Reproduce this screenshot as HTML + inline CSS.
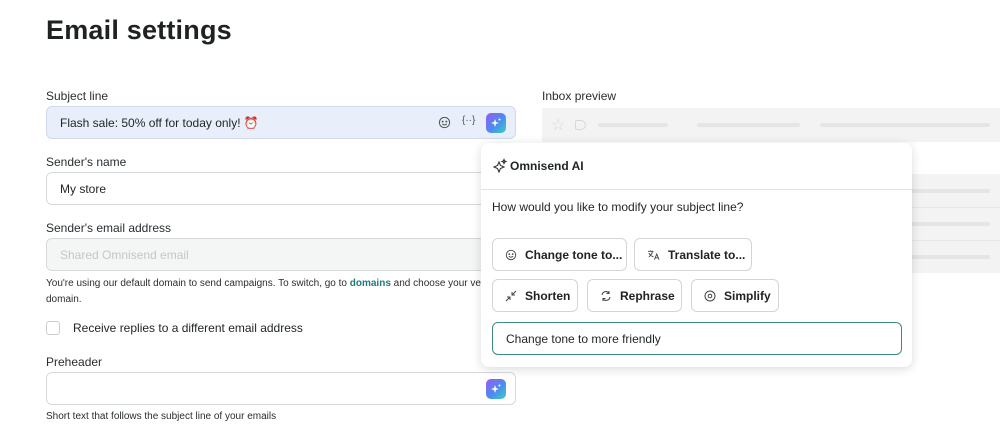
<!DOCTYPE html>
<html><head><meta charset="utf-8"><style>
*{box-sizing:border-box;margin:0;padding:0}
body{width:1000px;height:432px;overflow:hidden;background:#fff;font-family:"Liberation Sans",sans-serif;color:#1f2426;position:relative}
.a{position:absolute;white-space:nowrap}
h1{position:absolute;left:46px;top:15px;font-size:27px;font-weight:bold;letter-spacing:0.2px;color:#1e2222}
.lbl{font-size:12px;color:#2a2e30}
.inp{border:1px solid #d6d9db;border-radius:6px;background:#fff}
.t{font-size:12px}
.btn{position:absolute;border:1px solid #d3d6d8;border-radius:6px;background:#fff;font-size:12px;font-weight:bold;color:#222;display:flex;align-items:center;padding-left:12px;height:33px;white-space:nowrap}
.btn svg{margin-right:8px}
.ai{position:absolute;width:20px;height:20px;border-radius:5px;background:linear-gradient(135deg,#9a5bf0,#4a8cf0 55%,#3fd0c0)}
.bar{position:absolute;height:4px;background:#e4e5e6;border-radius:2px}
</style></head><body>
<h1>Email settings</h1>

<div class="a lbl" style="left:46px;top:89px">Subject line</div>
<div class="a inp" style="left:46px;top:106px;width:470px;height:33px;background:#e8effa;border-color:#cfdaea"></div>
<div class="a t" style="left:60px;top:116px">Flash sale: 50% off for today only! <span style="color:#d9534f">⏰</span></div>
<svg class="a" style="left:438px;top:116px" width="13" height="13" viewBox="0 0 14 14" fill="none" stroke="#555" stroke-width="1.1"><circle cx="7" cy="7" r="5.5"/><circle cx="5" cy="6" r=".5" fill="#555"/><circle cx="9" cy="6" r=".5" fill="#555"/><path d="M4.5 8.5q2.5 2.2 5 0"/></svg>
<div class="a" style="left:462px;top:115px;font-size:10px;color:#555">{··}</div>
<div class="ai" style="left:486px;top:113px"></div>
<svg class="a" style="left:490px;top:117px" width="12" height="12" viewBox="0 0 12 12" fill="#fff"><path d="M5 2l1 3 3 1-3 1-1 3-1-3-3-1 3-1z"/><circle cx="9.5" cy="2.5" r="1"/></svg>

<div class="a lbl" style="left:46px;top:155px">Sender's name</div>
<div class="a inp" style="left:46px;top:172px;width:470px;height:33px"></div>
<div class="a t" style="left:60px;top:182px">My store</div>

<div class="a lbl" style="left:46px;top:221px">Sender's email address</div>
<div class="a inp" style="left:46px;top:238px;width:470px;height:33px;background:#f4f5f5"></div>
<div class="a t" style="left:60px;top:248px;color:#c3c7c9">Shared Omnisend email</div>
<div class="a" style="left:46px;top:276px;font-size:10px;line-height:16px;color:#2a2e30">You're using our default domain to send campaigns. To switch, go to <span style="color:#1f7a78;font-weight:bold">domains</span> and choose your verified<br>domain.</div>

<div class="a" style="left:46px;top:321px;width:14px;height:14px;border:1px solid #c8ccce;border-radius:3px"></div>
<div class="a t" style="left:73px;top:321px">Receive replies to a different email address</div>

<div class="a lbl" style="left:46px;top:355px">Preheader</div>
<div class="a inp" style="left:46px;top:372px;width:470px;height:33px"></div>
<div class="ai" style="left:486px;top:379px"></div>
<svg class="a" style="left:490px;top:383px" width="12" height="12" viewBox="0 0 12 12" fill="#fff"><path d="M5 2l1 3 3 1-3 1-1 3-1-3-3-1 3-1z"/><circle cx="9.5" cy="2.5" r="1"/></svg>
<div class="a" style="left:46px;top:411px;font-size:10px;color:#2a2e30">Short text that follows the subject line of your emails</div>

<div class="a lbl" style="left:542px;top:89px">Inbox preview</div>
<div class="a" style="left:542px;top:108px;width:458px;height:34px;background:#f3f3f3"></div>
<div class="a" style="left:551px;top:115px;color:#d8d8d8;font-size:16px">☆</div>
<div class="a" style="left:575px;top:120px;width:11px;height:10px;border:1.5px solid #d8d8d8;border-radius:2px 5px 5px 2px"></div>
<div class="bar" style="left:598px;top:123px;width:70px"></div>
<div class="bar" style="left:697px;top:123px;width:103px"></div>
<div class="bar" style="left:820px;top:123px;width:170px"></div>
<div class="a" style="left:900px;top:174px;width:100px;height:99px;background:#f3f3f3"></div>
<div class="a" style="left:900px;top:207px;width:100px;height:1px;background:#e6e6e6"></div>
<div class="a" style="left:900px;top:240px;width:100px;height:1px;background:#e6e6e6"></div>
<div class="bar" style="left:900px;top:189px;width:90px"></div>
<div class="bar" style="left:900px;top:222px;width:90px"></div>
<div class="bar" style="left:900px;top:255px;width:90px"></div>

<div class="a" style="left:481px;top:143px;width:431px;height:224px;background:#fff;border-radius:8px;box-shadow:0 2px 10px rgba(0,0,0,0.15)"></div>
<svg class="a" style="left:492px;top:158px" width="16" height="16" viewBox="0 0 16 16" fill="none" stroke="#333" stroke-width="1.1"><path d="M7 4l1.5 3.5L12 9l-3.5 1.5L7 14l-1.5-3.5L2 9l3.5-1.5z"/><path d="M12 1.5l.6 1.4 1.4.6-1.4.6-.6 1.4-.6-1.4-1.4-.6 1.4-.6z"/></svg>
<div class="a" style="left:510px;top:159px;font-size:12px;font-weight:bold">Omnisend AI</div>
<div class="a" style="left:481px;top:189px;width:431px;height:1px;background:#dfe1e2"></div>
<div class="a t" style="left:492px;top:200px">How would you like to modify your subject line?</div>

<div class="btn" style="left:492px;top:238px;width:135px"><svg width="12" height="12" viewBox="0 0 14 14" fill="none" stroke="#444" stroke-width="1.1"><circle cx="7" cy="7" r="5.5"/><path d="M4.5 8.5q2.5 2.2 5 0"/><circle cx="5" cy="6" r=".5"/><circle cx="9" cy="6" r=".5"/></svg>Change tone to...</div>
<div class="btn" style="left:634px;top:238px;width:118px"><svg width="13" height="12" viewBox="0 0 14 12" fill="none" stroke="#444" stroke-width="1"><path d="M1 2h6M4 1v1M2 4q2 3 5 4M6 2q-1 4-4 6M8 11l2.5-6 2.5 6M9 9h3"/></svg>Translate to...</div>
<div class="btn" style="left:492px;top:279px;width:86px"><svg width="12" height="12" viewBox="0 0 12 12" fill="none" stroke="#444" stroke-width="1"><path d="M1 11l4-4M2 7h3v3M11 1L7 5M7 2v3h3"/></svg>Shorten</div>
<div class="btn" style="left:587px;top:279px;width:95px"><svg width="12" height="12" viewBox="0 0 12 12" fill="none" stroke="#444" stroke-width="1"><path d="M2 5a4 4 0 0 1 7-2M10 7a4 4 0 0 1-7 2M9 1v2.5H6.5M3 11V8.5h2.5"/></svg>Rephrase</div>
<div class="btn" style="left:691px;top:279px;width:88px"><svg width="12" height="12" viewBox="0 0 12 12" fill="none" stroke="#444" stroke-width="1"><circle cx="6" cy="6" r="5"/><circle cx="6" cy="6" r="1.8"/></svg>Simplify</div>
<div class="a" style="left:492px;top:322px;width:410px;height:33px;border:1px solid #3f8a8a;border-radius:6px"></div>
<div class="a t" style="left:506px;top:332px">Change tone to more friendly</div>
</body></html>
